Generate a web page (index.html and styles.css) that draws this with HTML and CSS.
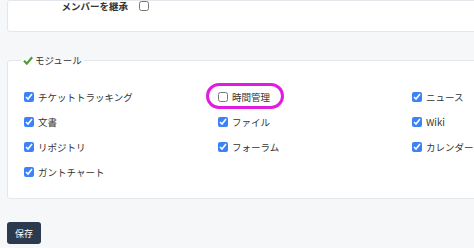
FILE: index.html
```html
<!DOCTYPE html>
<html lang="ja">
<head>
    <meta charset="UTF-8">
    <title>プロジェクト設定</title>
    <link rel="stylesheet" href="styles.css">
</head>
<body>
    <div class="page">
        <div class="box">
            <div class="form-row">
                <label class="form-label" for="inherit">メンバーを継承</label>
                <input type="checkbox" id="inherit">
            </div>
        </div>

        <fieldset class="box modules">
            <legend>
                <svg class="tick" width="10" height="9" viewBox="0 0 10 9"><path d="M1 4.8 L3.8 7.6 L9.2 1.2" fill="none" stroke="#4f9a35" stroke-width="2.2"/></svg>モジュール
            </legend>
            <div class="module-grid">
                <label class="module"><input type="checkbox" checked>チケットトラッキング</label>
                <label class="module marked"><input type="checkbox">時間管理</label>
                <label class="module"><input type="checkbox" checked>ニュース</label>
                <label class="module"><input type="checkbox" checked>文書</label>
                <label class="module"><input type="checkbox" checked>ファイル</label>
                <label class="module"><input type="checkbox" checked>Wiki</label>
                <label class="module"><input type="checkbox" checked>リポジトリ</label>
                <label class="module"><input type="checkbox" checked>フォーラム</label>
                <label class="module"><input type="checkbox" checked>カレンダー</label>
                <label class="module"><input type="checkbox" checked>ガントチャート</label>
            </div>
        </fieldset>

        <button class="save">保存</button>
    </div>
</body>
</html>
```

FILE: styles.css
```css
* {
    box-sizing: border-box;
}

body {
    margin: 0;
    background: #f6f7f9;
    font-family: "Noto Sans CJK JP", "Noto Sans", sans-serif;
    font-size: 9.5px;
    color: #333;
    overflow: hidden;
}

.page {
    padding-left: 7px;
    width: 500px;
}

.box {
    background: #fff;
    border: 1px solid #e3e6ea;
    border-radius: 3px;
}

.form-row {
    display: flex;
    align-items: center;
    margin-top: -14px;
    padding: 12px 0 18px;
}

.form-label {
    width: 120px;
    text-align: right;
    font-weight: bold;
    margin-right: 11px;
    line-height: 14px;
}

input[type="checkbox"] {
    width: 10px;
    height: 10px;
    margin: 0;
    accent-color: #3b82f6;
}

.modules {
    margin: 21px 0 0;
    padding: 17px 16px 14px;
    min-width: 0;
}

.modules legend {
    margin-left: -3px;
    padding: 0 2px;
    line-height: 14px;
}

.tick {
    margin-right: 2px;
    vertical-align: -1px;
}

.module-grid {
    display: grid;
    grid-template-columns: repeat(3, 194px);
    grid-auto-rows: 25px;
}

.module {
    display: flex;
    align-items: center;
    gap: 4px;
}

.marked {
    position: relative;
}

.marked::after {
    content: "";
    position: absolute;
    left: -12px;
    top: -1px;
    width: 78px;
    height: 26px;
    box-sizing: border-box;
    border: 3.5px solid #e21be0;
    border-radius: 13px;
}

.save {
    margin-top: 23px;
    height: 22px;
    width: 34px;
    padding: 0;
    border: none;
    border-radius: 3px;
    background: #2b3a4e;
    color: #fff;
    font-family: inherit;
    font-size: 9px;
}
```
